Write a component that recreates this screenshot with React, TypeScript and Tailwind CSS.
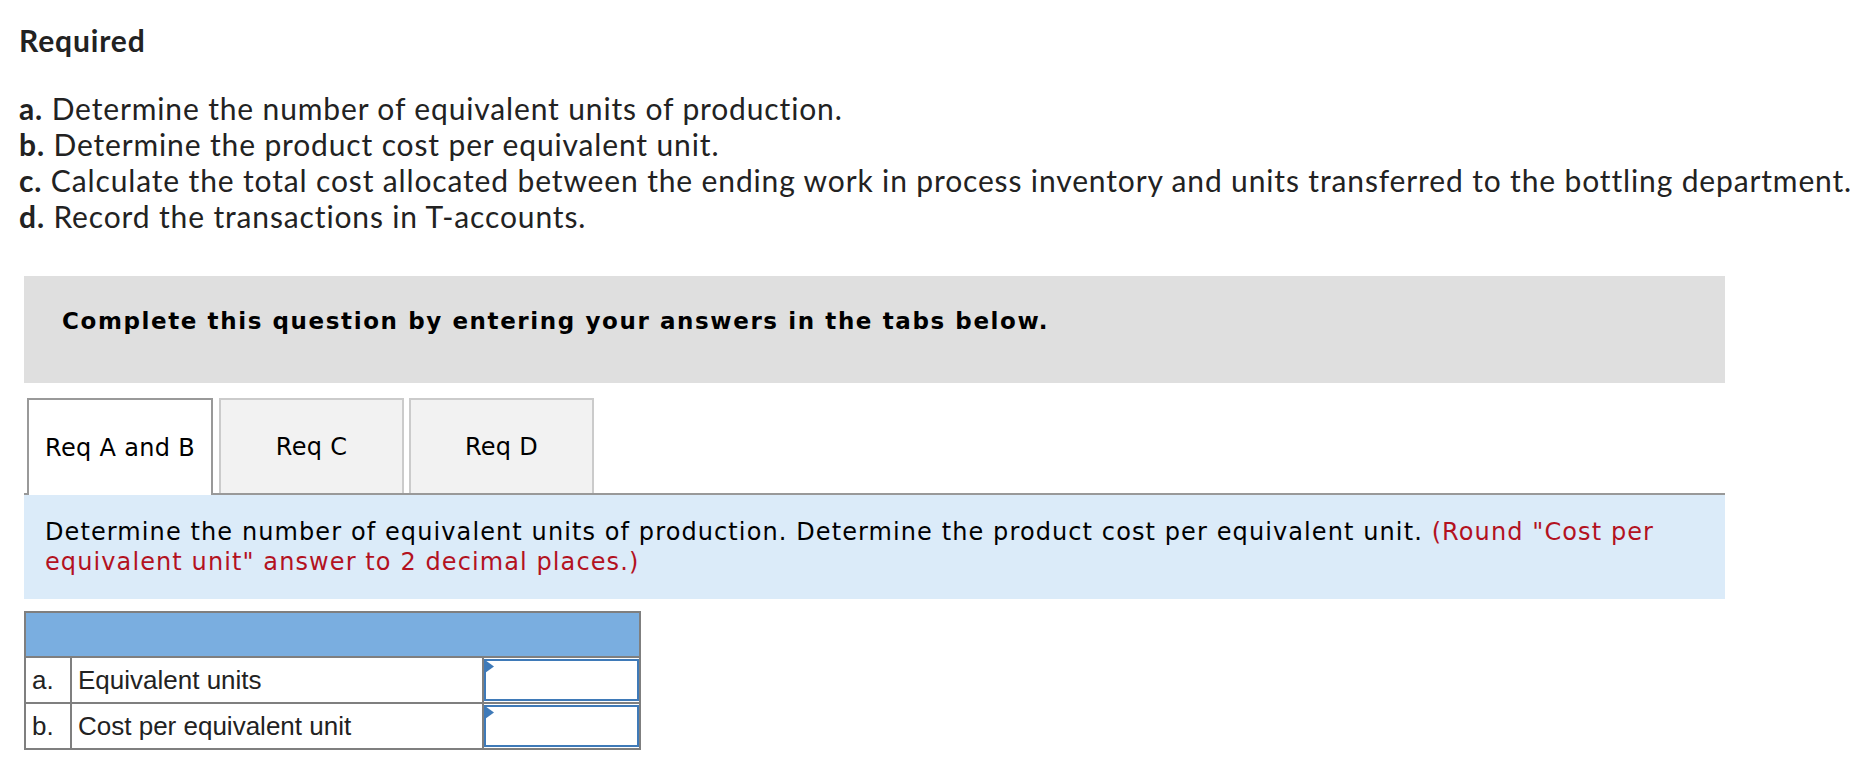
import React from 'react';

const tasks = [
    { key: 'a.', text: 'Determine the number of equivalent units of production.' },
    { key: 'b.', text: 'Determine the product cost per equivalent unit.' },
    { key: 'c.', text: 'Calculate the total cost allocated between the ending work in process inventory and units transferred to the bottling department.' },
    { key: 'd.', text: 'Record the transactions in T-accounts.' },
];

const rows = [
    { key: 'a.', label: 'Equivalent units' },
    { key: 'b.', label: 'Cost per equivalent unit' },
];

const AnswerInput: React.FC = () => (
    <div className="relative mt-px h-[42px] border-2 border-[#3f7ab8] bg-white">
        <svg className="absolute -left-[1px] -top-[1px]" width="10" height="14" viewBox="0 0 10 14">
            <polygon points="0,0 9,6.5 0,13" fill="#3f7ab8" />
        </svg>
    </div>
);

export default function App() {
    return (
        <div className="w-full h-[764px] bg-white overflow-hidden text-[#222]">
            <div className="pl-[19px] pt-[22px] font-['Lato',sans-serif] text-[30px] leading-[36px] tracking-[0.86px]">
                <div className="font-bold">Required</div>
                <div className="mt-[32px]">
                    {tasks.map(t => (
                        <div key={t.key} className="whitespace-nowrap">
                            <span className="font-bold">{t.key}</span> {t.text}
                        </div>
                    ))}
                </div>
            </div>

            <div className="ml-[24px] w-[1701px] mt-[42px] font-['DejaVu_Sans',Verdana,sans-serif]">
                <div className="h-[107px] bg-[#dfdfdf] pl-[38px] pt-[30px]">
                    <div className="text-[23px] leading-[30px] font-bold tracking-[1.6px] text-black">
                        Complete this question by entering your answers in the tabs below.
                    </div>
                </div>

                <div className="mt-[15px] flex items-end border-b-2 border-[#999]">
                    <div className="ml-[3px] w-[186px] h-[97px] -mb-[2px] bg-white border-x-2 border-t-2 border-[#999] flex items-center justify-center text-[24px] tracking-[0.3px] text-black">
                        Req A and B
                    </div>
                    <div className="ml-[6px] w-[185px] h-[95px] bg-[#f2f2f2] border-x-2 border-t-2 border-[#cbcbcb] flex items-center justify-center text-[24px] tracking-[0.3px] text-black">
                        Req C
                    </div>
                    <div className="ml-[5px] w-[185px] h-[95px] bg-[#f2f2f2] border-x-2 border-t-2 border-[#cbcbcb] flex items-center justify-center text-[24px] tracking-[0.3px] text-black">
                        Req D
                    </div>
                </div>

                <div className="h-[104px] bg-[#dbebf9] pl-[21px] pt-[22px]">
                    <p className="text-[24px] leading-[30px] tracking-[1.1px] text-black whitespace-nowrap">
                        Determine the number of equivalent units of production. Determine the product cost per equivalent unit.{' '}
                        <span className="text-[#b3121f]">(Round "Cost per<br />equivalent unit" answer to 2 decimal places.)</span>
                    </p>
                </div>

                <div className="mt-[12px] w-[617px] bg-[#7f7f7f] p-[2px] grid grid-cols-[44px_410px_155px] gap-[2px] font-['Liberation_Sans',Arial,sans-serif] text-[26px] text-[#222]">
                    <div className="col-span-3 h-[43px] bg-[#7aaee0]"></div>
                    {rows.map(r => (
                        <React.Fragment key={r.key}>
                            <div className="h-[44px] bg-white pl-[6px] flex items-center">{r.key}</div>
                            <div className="h-[44px] bg-white pl-[6px] flex items-center">{r.label}</div>
                            <div className="h-[44px] bg-white">
                                <AnswerInput />
                            </div>
                        </React.Fragment>
                    ))}
                </div>
            </div>
        </div>
    );
}
